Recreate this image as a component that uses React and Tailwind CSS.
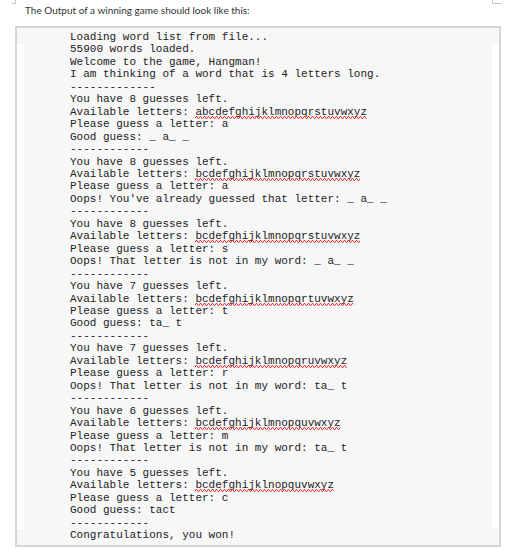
const lines = [
  ['Loading word list from file...'],
  ['55900 words loaded.'],
  ['Welcome to the game, Hangman!'],
  ['I am thinking of a word that is 4 letters long.'],
  ['-------------'],
  ['You have 8 guesses left.'],
  ['Available letters: ', 'abcdefghijklmnopqrstuvwxyz'],
  ['Please guess a letter: a'],
  ['Good guess: _ a_ _'],
  ['------------'],
  ['You have 8 guesses left.'],
  ['Available letters: ', 'bcdefghijklmnopqrstuvwxyz'],
  ['Please guess a letter: a'],
  ["Oops! You've already guessed that letter: _ a_ _"],
  ['------------'],
  ['You have 8 guesses left.'],
  ['Available letters: ', 'bcdefghijklmnopqrstuvwxyz'],
  ['Please guess a letter: s'],
  ['Oops! That letter is not in my word: _ a_ _'],
  ['------------'],
  ['You have 7 guesses left.'],
  ['Available letters: ', 'bcdefghijklmnopqrtuvwxyz'],
  ['Please guess a letter: t'],
  ['Good guess: ta_ t'],
  ['------------'],
  ['You have 7 guesses left.'],
  ['Available letters: ', 'bcdefghijklmnopqruvwxyz'],
  ['Please guess a letter: r'],
  ['Oops! That letter is not in my word: ta_ t'],
  ['------------'],
  ['You have 6 guesses left.'],
  ['Available letters: ', 'bcdefghijklmnopquvwxyz'],
  ['Please guess a letter: m'],
  ['Oops! That letter is not in my word: ta_ t'],
  ['------------'],
  ['You have 5 guesses left.'],
  ['Available letters: ', 'bcdefghijklnopquvwxyz'],
  ['Please guess a letter: c'],
  ['Good guess: tact'],
  ['------------'],
  ['Congratulations, you won!'],
];

// red spell-check squiggle under a word
function Squiggle({ children }) {
  return (
    <span className="relative">
      {children}
      <svg className="absolute left-0 top-[10px] w-full h-[3px] pointer-events-none" preserveAspectRatio="none">
        <defs>
          <pattern id="sq" width="4" height="3" patternUnits="userSpaceOnUse">
            <path d="M0 2.5 L1 0.5 L2 0.5 L3 2.5 L4 2.5" fill="none" stroke="#e8262a" strokeWidth="0.9" />
          </pattern>
        </defs>
        <rect width="100%" height="3" fill="url(#sq)" />
      </svg>
    </span>
  );
}

export default function App() {
  return (
    <div className="w-[510px] h-[550px] bg-white relative overflow-hidden">
      {/* page corner marks */}
      <div className="absolute left-[12px] top-0 w-[4px] h-[4px] border-r border-b border-[#c8c8c8]" />
      <div className="absolute left-[492px] top-0 w-[10px] h-[4px] border-l border-b border-[#c8c8c8]" />

      <div className="pl-[25px] pt-[3px] h-[26px] text-[10px] leading-[14px] text-[#333] font-['Lato','Open_Sans',sans-serif]">
        The Output of a winning game should look like this:
      </div>

      <div className="ml-[15px] w-[486px] h-[521px] border-2 border-[#d6d6d6] bg-[#f7f7f7] flex">
        <div className="w-[7px] mt-[16px] mb-[16px] bg-white" />
        <pre className="flex-1 pl-[46px] pt-[3px] text-[11px] leading-[12.45px] text-[#222] font-['Liberation_Mono','Courier_New',monospace]">
          {lines.map((l, i) => (
            <div key={i}>
              {l[0]}
              {l[1] && <Squiggle>{l[1]}</Squiggle>}
            </div>
          ))}
        </pre>
        <div className="w-[7px] mt-[16px] mb-[16px] bg-white" />
      </div>
    </div>
  );
}
